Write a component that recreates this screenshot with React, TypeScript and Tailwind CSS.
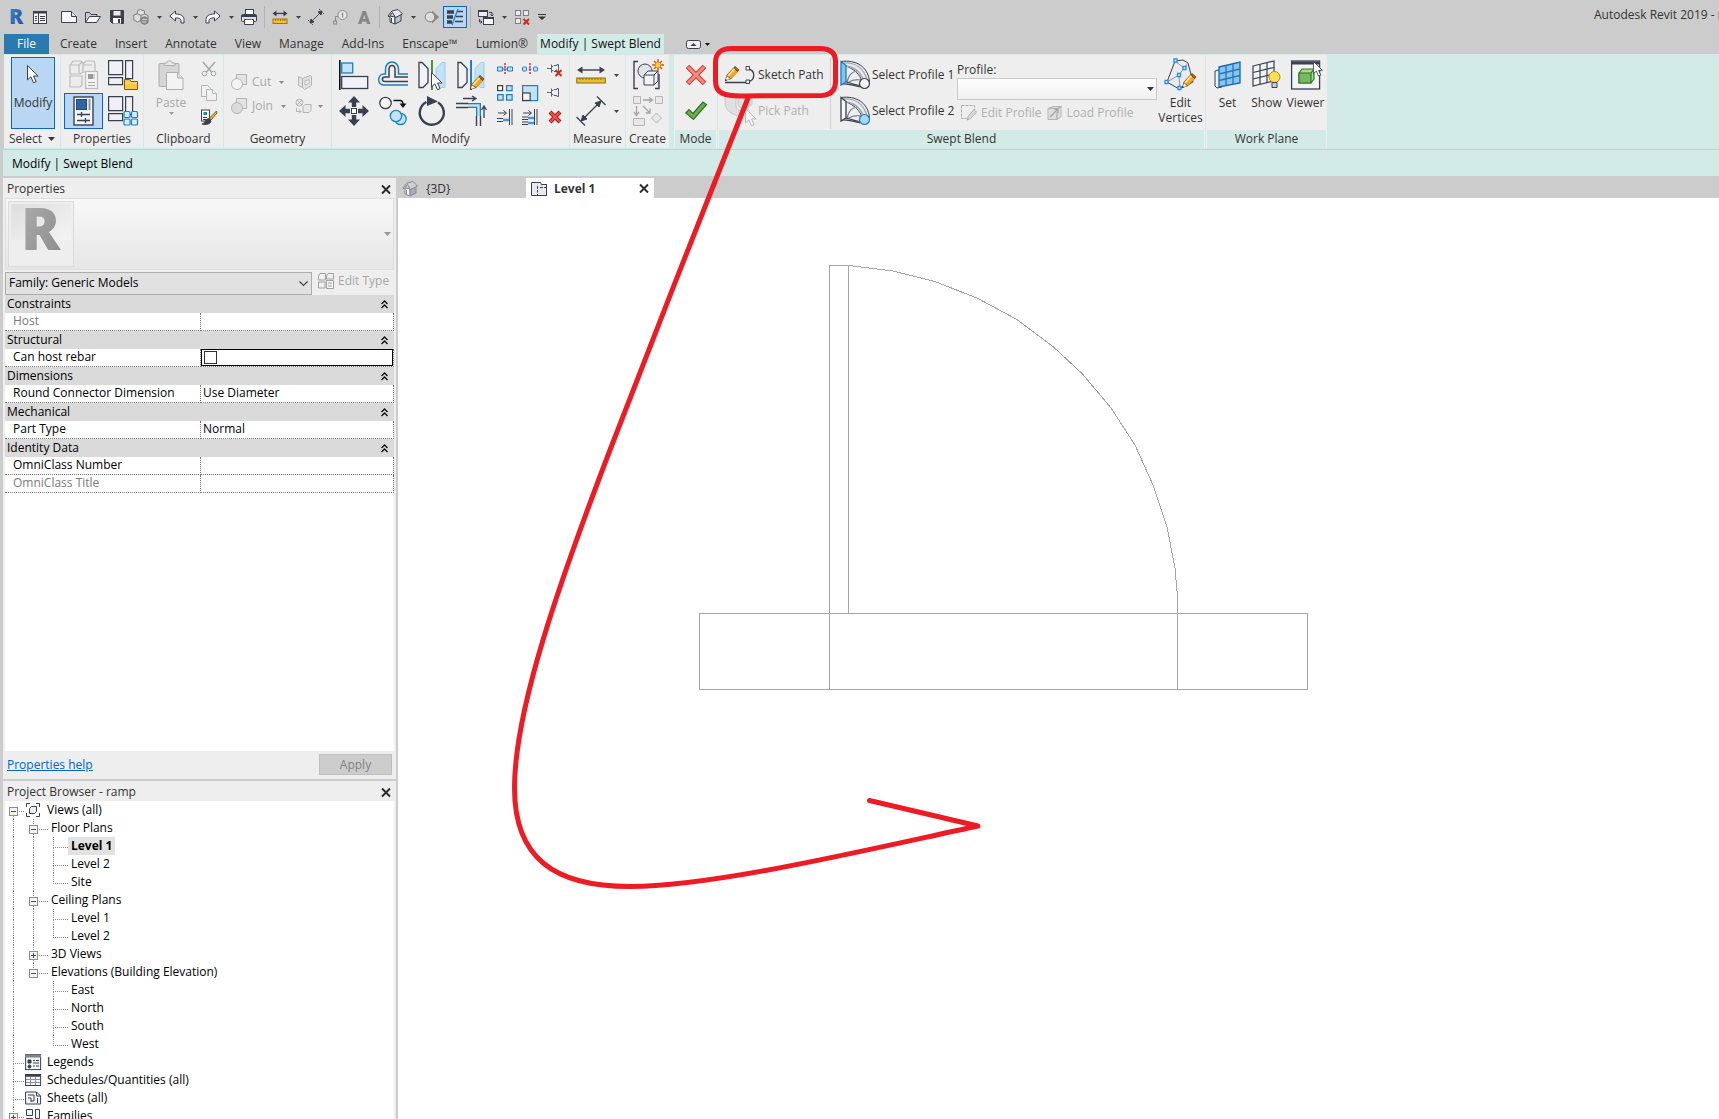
import React from 'react';
import clsx from 'clsx';

const INK = '#3a404d';
const BLUE = '#1a7fc4';
const SKY = '#c2e2f5';
const GREY = '#b4b4b4';

type SvgProps = {
  w?: number;
  h?: number;
  children: React.ReactNode;
  className?: string;
};

function Svg({w = 16, h = w, children, className}: SvgProps) {
  return (
    <svg
      width={w}
      height={h}
      viewBox={`0 0 ${w} ${h}`}
      fill="none"
      stroke={INK}
      aria-hidden="true"
      className={clsx('shrink-0 overflow-visible', className)}
    >
      {children}
    </svg>
  );
}

function Caret({color = '#444'}: {color?: string}) {
  return (
    <Svg w={5} h={3}>
      <path d="M0 0h5L2.5 3z" fill={color} stroke="none"/>
    </Svg>
  );
}

function CloseIcon() {
  return (
    <Svg w={10} h={9}>
      <path d="M1 .5l8 8M9 .5l-8 8" stroke="#2b2b2b" strokeWidth="1.9"/>
    </Svg>
  );
}

function Cursor({x = 0, y = 0}: {x?: number; y?: number}) {
  return (
    <path
      transform={`translate(${x} ${y})`}
      d="M.5.5v14.4l3.4-3.1 2.6 6 2.6-1.2-2.6-5.6h4.6z"
      fill="#fff"
      stroke={INK}
    />
  );
}

function Pencil({x = 0, y = 0}: {x?: number; y?: number}) {
  return (
    <g transform={`translate(${x} ${y})`} stroke="none">
      <path d="M0 15l1.500-6L10 0l4.500 4L6 13z" fill="#6b4416"/>
      <path d="M2.200 9.300L8.700 2.300l3.900 3.600L5.900 12.600z" fill="#f2a71f"/>
      <path d="M2.200 9.300L8.700 2.300l1.500 1.300L3.700 10.600z" fill="#ffe08a"/>
      <path d="M9.300 1.700l.8-.8 3.700 3.200-.8.900z" fill="#b5652a"/>
      <path d="M1.900 10l3.200 2.800L.8 14.200z" fill="#fff4df"/>
      <path d="M0 15l.6-2 1.400 1.300z" fill="#222"/>
    </g>
  );
}

/* ---------- quick access icons ---------- */

const RevitLogo = () => (
  <Svg w={18} h={22}>
    <defs>
      <linearGradient id="logoBlue" x1="0" y1="0" x2="1" y2="1">
        <stop offset="0" stopColor="#3d8ad0"/>
        <stop offset="1" stopColor="#1b4f93"/>
      </linearGradient>
    </defs>
    <text x="2" y="18" fontFamily="Open Sans, sans-serif" fontWeight="800" fontSize="21" fill="url(#logoBlue)" stroke="none">R</text>
  </Svg>
);

const HomeList = () => (
  <Svg>
    <rect x="1.500" y="2.500" width="13" height="12" fill="#f2f3f6"/>
    <path d="M1 3.500h14" strokeWidth="2"/>
    <path d="M6.500 4v10M3 7.500h2M3 9.500h2M3 11.500h2M8 7.500h5M8 9.500h5M8 11.500h5"/>
  </Svg>
);

const NewDoc = () => (
  <Svg>
    <path d="M.5 2.500h10l5 5v6H.5z" fill="#f7f7fa"/>
    <path d="M10.500 2.500v5h5" fill="#dcdee6"/>
  </Svg>
);

const OpenFolder = () => (
  <Svg>
    <path d="M.5 13.500v-10h4l1.500 2h6v2" fill="#c9ccd4"/>
    <path d="M.5 13.500l4-6h11l-4 6z" fill="#f4f5f8"/>
  </Svg>
);

const Save = () => (
  <Svg>
    <path d="M1.500 1.500h13v13h-11l-2-2z" fill={INK}/>
    <rect x="4.500" y="2" width="7" height="4.500" fill="#e9ebf0" stroke="none"/>
    <rect x="4" y="9" width="8" height="5.500" fill="#fff" stroke="none"/>
    <rect x="9" y="10" width="2" height="4" fill={INK} stroke="none"/>
  </Svg>
);

const Sync = () => (
  <Svg>
    <g stroke="#808080" fill="#dedede">
      <path d="M4.500 1.500l3-1 4 1.500v4l-3.500 1-3.500-1.500z"/>
      <path d="M.8 6l3.500-1.200L8 6.500v5L4.500 13 .8 11z"/>
      <path d="M8 6.500L11.500 5 15 6.500V10l-7 2z"/>
      <circle cx="11.500" cy="11.500" r="3.800" fill="#8f8f8f"/>
      <path d="M9 10.500h5M9 13h4" stroke="#c7c7c7"/>
    </g>
  </Svg>
);

const Undo = ({flip = false}: {flip?: boolean}) => (
  <Svg className={flip ? '-scale-x-100' : ''}>
    <path d="M.8 7L6.500 2v3c5.500 0 8.500 2 8.500 5.500V14h-3v-2.500c0-1.800-2-2.600-5.500-2.600V12z" fill="#f6f6f8"/>
  </Svg>
);

const Print = () => (
  <Svg>
    <rect x="4.500" y=".5" width="8" height="6" fill="#fff"/>
    <rect x=".5" y="5.500" width="15" height="7" rx="1" fill="#dcdfe6"/>
    <path d="M1 7h14" strokeWidth="2"/>
    <path d="M3.500 10.500h9v5h-9z" fill="#fff"/>
    <path d="M5 10.500h6" stroke={BLUE}/>
  </Svg>
);

const MeasureSmall = () => (
  <Svg>
    <path d="M2 4.500h12" strokeWidth="1.300"/>
    <path d="M4.500 1.500L.5 4.500l4 3zM11.500 1.500l4 3-4 3z" fill={INK} stroke="none"/>
    <rect x="1" y="10" width="14" height="4.500" fill="#f4c02f" stroke="#a8720c"/>
    <path d="M3.500 10v2M6 10v2M8.500 10v2M11 10v2M13 10v2" stroke="#a8720c"/>
  </Svg>
);

const DimSmall = () => (
  <Svg>
    <path d="M3 13L13 3"/>
    <path d="M2 14l1-4 3 3zM14 2l-4 1 3 3z" fill={INK}/>
    <path d="M0 11l5 5M11 0l5 5" strokeDasharray="2 1"/>
  </Svg>
);

const Tag = () => (
  <Svg>
    <g stroke="#8c8c8c">
      <circle cx="10.500" cy="6" r="4.500" fill="#e8e8e8"/>
      <path d="M6 7.500H3.500v5"/>
      <rect x="1.500" y="12" width="3" height="3"/>
      <path d="M9.500 5l1.200-1v4.500" stroke="#777"/>
    </g>
  </Svg>
);

const TextTool = () => (
  <Svg>
    <text x="2" y="15" fontFamily="Roboto, sans-serif" fontWeight="900" fontSize="18" fill="#868686" stroke="none">A</text>
  </Svg>
);

const House = ({grey = false}: {grey?: boolean}) => (
  <Svg>
    <g stroke={grey ? '#85898f' : INK}>
      <path d="M3 7v6l5 2V8z" fill="#f4f5f8"/>
      <path d="M8 8v7l6-3V5z" fill={grey ? '#a9adb3' : '#b9c1cf'}/>
      <path d="M1 7l4-5 6-1.500L15.500 5 8.500 8.500 5.500 3.500 2 8z" fill={grey ? '#cdd0d4' : '#e4e8ef'}/>
      <path d="M4.500 9v4"/>
    </g>
  </Svg>
);

const Section = () => (
  <Svg>
    <path d="M9 1.500l7 6.500-7 6.500z" fill="#868686" stroke="none"/>
    <circle cx="7" cy="8" r="4.800" fill="#ddd" stroke="#868686"/>
  </Svg>
);

const ThinLines = () => (
  <Svg w={18} h={16}>
    <path d="M1 3h7M1 8h6M1 13h5" strokeWidth="3.500"/>
    <path d="M11 2.500h6M10 7.500h7M9 12.500h8" strokeWidth="1.500"/>
    <path d="M12 0L6 16" stroke="#1283e6" strokeWidth="1.300"/>
  </Svg>
);

const SwitchWindows = () => (
  <Svg>
    <rect x=".5" y="1.500" width="9" height="6" fill="#eceef3"/>
    <path d="M0 2h10" strokeWidth="2"/>
    <rect x="5.500" y="8.500" width="10" height="7" fill="#f7f8fa"/>
    <path d="M5 9h11" strokeWidth="2"/>
    <path d="M11 3.500h3v3M12.500 5.500l1.500 1.500 1.500-1.500M1.500 10v3h2M2.500 11.500L4 13l-1.500 1.500"/>
  </Svg>
);

const CloseHidden = () => (
  <Svg>
    <g stroke="#7b8089" fill="#e9eaee">
      <rect x="1.500" y="1.500" width="5" height="5"/>
      <rect x="9.500" y="1.500" width="5" height="5"/>
      <rect x="1.500" y="9.500" width="5" height="5"/>
    </g>
    <path d="M9.500 10l5.500 5.500M15 10l-5.500 5.500" stroke="#d5261f" strokeWidth="2"/>
  </Svg>
);

/* ---------- ribbon icons ---------- */

const FamilyGrid = ({badge}: {badge: 'folder' | 'cubes'}) => (
  <Svg w={30} h={30}>
    <g fill="#f0f1f6" strokeWidth="1.200">
      <path d="M.6.6h14v14H.6zM17.600.6h7v18h-7zM.6 17.600h14v7H.6z"/>
    </g>
    {badge === 'folder' ? (
      <g stroke="#8c5a06">
        <path d="M16.500 29.500v-10h5l1.500 2h6.500v8z" fill="#f6c945"/>
        <path d="M17 23h12" stroke="#fde38d"/>
      </g>
    ) : (
      <g stroke={BLUE} fill="#d3edfa" strokeWidth="1.200">
        <rect x="16" y="15.500" width="6" height="6" rx="1"/>
        <rect x="23.500" y="15.500" width="6" height="6" rx="1"/>
        <rect x="16" y="23" width="6" height="6" rx="1"/>
        <rect x="23.500" y="23" width="6" height="6" rx="1"/>
      </g>
    )}
  </Svg>
);

const TypeProps = () => (
  <Svg w={30} h={30}>
    <g stroke="#bdbdbd" fill="#ececec" strokeWidth="1.200">
      <path d="M1 5l3-4h8l2 2v9l-3 2H1zM14 4l3-3h8l1 3v8H14zM1 16h12v9l-2 2H1z"/>
      <path d="M1 5h9v9M10 5l3-3M14 5h9"/>
      <rect x="16.500" y="11.500" width="12" height="17" fill="#f2f2f2"/>
    </g>
    <rect x="19" y="14" width="5" height="5" fill="#999" stroke="none"/>
    <path d="M25 14v5M19 22.500h7M19 25.500h7" stroke="#aaa"/>
  </Svg>
);

const PropsSheet = () => (
  <Svg w={21} h={30}>
    <rect x="1" y="1" width="19" height="28" fill="#f5f6f9" strokeWidth="1.400"/>
    <rect x="3.500" y="3.500" width="10" height="10" fill="#2f64a3" stroke="#1d4a80"/>
    <path d="M16.500 3v11" stroke="#8d95a5" strokeWidth="2"/>
    <path d="M4 18.500h13M8.500 16v5M4 24.500h13M12.500 22v5" strokeWidth="1.300"/>
  </Svg>
);

const PasteIcon = () => (
  <Svg w={26} h={30}>
    <g stroke="#adadad">
      <rect x="1" y="3.500" width="20" height="23" rx="1" fill="#d6d6d6"/>
      <path d="M6 5.500V3h3c0-3 5-3 5 0h3v2.500z" fill="#e9e9e9"/>
      <path d="M8.500 12.500h11l5.500 5.500v11.500H8.500z" fill="#f3f3f3"/>
      <path d="M19.500 12.500V18H25" fill="#ddd"/>
    </g>
  </Svg>
);

const CutIcon = () => (
  <Svg>
    <path d="M2 1l8.500 10M14 1L5.500 11" stroke="#a5a5a5" strokeWidth="1.400"/>
    <circle cx="3.500" cy="12.500" r="2.300" stroke="#a5a5a5"/>
    <circle cx="12.500" cy="12.500" r="2.300" stroke="#a5a5a5"/>
  </Svg>
);

const CopyIcon = () => (
  <Svg>
    <g stroke={GREY} fill="#f1f1f1">
      <path d="M.5.500h6l3 3v8h-9z"/>
      <path d="M5.500 4.500h6l4 4v7h-10z"/>
      <path d="M11.500 4.500v4h4"/>
    </g>
  </Svg>
);

const MatchIcon = () => (
  <Svg>
    <rect x=".5" y="1" width="8" height="11" fill="#fff"/>
    <rect x="2.500" y="3" width="3.500" height="3" fill={BLUE} stroke="none"/>
    <path d="M2 8.500h4M2 10.500h4"/>
    <path d="M15.500 2l-7 7 1.500 2 6-7z" fill="#f0b840" stroke="#7a5b22"/>
    <path d="M1 15c3 0 3-5 6.500-5.500L10 12c0 3-5 4-9 3z" fill={INK}/>
  </Svg>
);

const GeoCut = ({solid = false}: {solid?: boolean}) => (
  <Svg>
    <rect x="5.500" y=".5" width="10" height="10" fill="#e4e4e4" stroke={GREY}/>
    <circle cx="6" cy="10" r="5.500" fill={solid ? '#dcdcdc' : '#f4f4f4'} stroke={GREY}/>
  </Svg>
);

const Cope = () => (
  <Svg>
    <g stroke={GREY} fill="#e2e2e2">
      <path d="M1.500 2.500l4 2v9l-4-2zM5.500 4.500l8-3 1 1v9l-7 4-2-2z"/>
      <path d="M8 7l4-1.500v4L8 11z" fill="#f4f4f4"/>
    </g>
  </Svg>
);

const SplitFace = () => (
  <Svg>
    <g stroke={GREY} fill="#e8e8e8">
      <circle cx="4.500" cy="4.500" r="3.500"/>
      <path d="M2 2l5 5M7 2L2 7"/>
      <path d="M8 8.500l2-2h6v6l-2 2H8z"/>
      <path d="M1.500 10v3.500h4M4 11.500l2 2-2 2" fill="none"/>
    </g>
  </Svg>
);

const Align = () => (
  <Svg w={30} h={30}>
    <path d="M.8 0v30" stroke="#000" strokeWidth="1.500"/>
    <rect x="2.700" y="3" width="11" height="10" fill={SKY} stroke={BLUE} strokeWidth="1.300"/>
    <rect x="2.700" y="16.500" width="26" height="12" fill="#f1f2f6" strokeWidth="1.300"/>
  </Svg>
);

const Offset = () => (
  <Svg w={30} h={30}>
    <path d="M30 25H5.500C-1 25-1 14 6 14h1.500V9.500c0-10 13-10 13 0V14H30" stroke={BLUE} strokeWidth="1.500"/>
    <path d="M30 21.500H7c-3.500 0-3.500-4.500 0-4.500h4V9.500c0-5.500 6-5.500 6 0V17h13" strokeWidth="1.500"/>
  </Svg>
);

const MirrorPick = ({draw = false}: {draw?: boolean}) => (
  <Svg w={30} h={30}>
    <path d="M2 2.500h3l6 6v14l-3 3-2 2H2z" fill="#f1f2f6" strokeWidth="1.300"/>
    <path d="M28 2.500h-3l-6 6v14l5 5h4z" fill={SKY} stroke="#9fcbe8"/>
    <path d="M15 0v30" stroke={draw ? '#1d7fd8' : '#3f9a2f'} strokeWidth="2"/>
    {draw ? <Pencil x={14} y={15}/> : <Cursor x={14} y={12}/>}
  </Svg>
);

const Move = () => (
  <Svg w={30} h={30}>
    <g fill={INK} stroke="none">
      <path d="M15 0l6 6.500h-3.800V11h-4.400V6.500H9zM15 30l6-6.500h-3.800V19h-4.400v4.500H9z"/>
      <path d="M0 15l6.500-6v3.800H11v4.400H6.500V21zM30 15l-6.500-6v3.800H19v4.400h4.500V21z"/>
    </g>
    <rect x="12.500" y="12.500" width="5" height="5" fill="#fff"/>
  </Svg>
);

const CopyTool = () => (
  <Svg w={30} h={30}>
    <circle cx="7.500" cy="7" r="5.700" fill="#f6f6f8" strokeWidth="1.300"/>
    <circle cx="22.500" cy="23" r="5.700" fill={SKY} stroke={BLUE} strokeWidth="1.300"/>
    <circle cx="18" cy="20" r="5.700" fill={SKY} stroke={BLUE} strokeWidth="1.300"/>
    <path d="M15.500 4.500h6.500c2 0 3 1.500 3 4" stroke="#111" strokeWidth="1.500"/>
    <path d="M21.500 7.500h7L25 12z" fill="#111" stroke="none"/>
  </Svg>
);

const Rotate = () => (
  <Svg w={30} h={30}>
    <path d="M9.500 6A12 12 0 1 0 21 6.500" strokeWidth="2.400"/>
    <path d="M10 0l11 5.500L10 10z" fill={INK} stroke="none"/>
  </Svg>
);

const Trim = () => (
  <Svg w={30} h={30}>
    <path d="M0 7.500h12M0 11.500h12M20.500 20v10M24.500 20v10" strokeWidth="1.400"/>
    <path d="M12 9.500h10.500V20" stroke={BLUE} strokeWidth="5"/>
    <path d="M12 9.500h10.500V20" stroke={SKY} strokeWidth="2.400"/>
    <path d="M7 2.500h12M16 0l4 2.500L16 5M28 22V11M25.500 14L28 10l2.500 4" strokeWidth="1.300"/>
  </Svg>
);

const Split = ({gap = false}: {gap?: boolean}) => (
  <Svg>
    {gap ? (
      <g fill={SKY} stroke={BLUE}>
        <rect x=".5" y="6" width="4" height="4" rx="1"/>
        <rect x="11.500" y="6" width="4" height="4" rx="1"/>
        <path d="M6.500 8h3"/>
      </g>
    ) : (
      <path d="M.5 6h5v4h-5zM10.500 6h5v4h-5zM5 8h6" fill={SKY} stroke={BLUE}/>
    )}
    <path d="M8 2v12" stroke="#d5261f" strokeDasharray="2 1" strokeWidth="1.400"/>
  </Svg>
);

const Pin = ({un = false}: {un?: boolean}) => (
  <Svg>
    <path d="M0 7.500h4M4.500 3.500v8" stroke="#5a606c"/>
    <path d="M4.500 5.500h1.500l1-1h3v-1h1.500v8H10v-1H7l-1-1H4.500z" fill="#eef0f4" stroke="#5a606c"/>
    {un && <path d="M8.500 9l6 6M14.500 9l-6 6" stroke="#d5261f" strokeWidth="1.900"/>}
  </Svg>
);

const ArrayIcon = () => (
  <Svg>
    <rect x=".6" y=".6" width="5" height="5" fill="#f7f7f9" strokeWidth="1.200"/>
    <g fill={SKY} stroke={BLUE} strokeWidth="1.200">
      <path d="M9.600.6h5.500v5H9.600zM.6 9.600h5.500v5.500H.6zM9.600 9.600h5.500v5.500H9.600z"/>
    </g>
  </Svg>
);

const Scale = () => (
  <Svg>
    <rect x=".6" y=".6" width="15" height="15" fill={SKY} stroke={BLUE} strokeWidth="1.200"/>
    <rect x=".6" y="8" width="7.500" height="7.500" fill="#f7f7f9" strokeWidth="1.200"/>
  </Svg>
);

const TrimSingle = ({multi = false}: {multi?: boolean}) => (
  <Svg>
    <path d="M12.500 0v16M15 0v16M1 4h8M6.500 1.500L9.500 4l-3 2.500"/>
    <path d={multi ? 'M0 8h6M0 10.500h6M0 13h6M0 15.500h6' : 'M0 9.500h6M0 12.500h6'}/>
    <path d={multi ? 'M6 9h6M6 14h6' : 'M6 11h6'} stroke="#3f9be0" strokeWidth="2.500"/>
  </Svg>
);

const DeleteIcon = () => (
  <Svg>
    <path d="M3 3l10 10M13 3L3 13" stroke="#a81a16" strokeWidth="4.200"/>
    <path d="M3.500 3.500l9 9M12.500 3.500l-9 9" stroke="#e9544c" strokeWidth="2.200"/>
  </Svg>
);

const MeasureBig = () => (
  <Svg w={30} h={30}>
    <path d="M3 10h24" strokeWidth="1.400"/>
    <path d="M6.500 6.500L1 10l5.500 3.500zM23.500 6.500L29 10l-5.500 3.500z" fill={INK} stroke="none"/>
    <rect x=".8" y="18" width="28.500" height="5" fill="#eabf2d" stroke="#8f6a0d"/>
    <path d="M4 18v2M7 18v2M10 18v2M13 18v2M16 18v2M19 18v2M22 18v2M25 18v2" stroke="#8f6a0d"/>
  </Svg>
);

const DimBig = () => (
  <Svg w={30} h={30}>
    <path d="M6 24L24 6" strokeWidth="1.300"/>
    <path d="M5 25l2-6 4 4zM25 5l-6 2 4 4z" fill={INK}/>
    <path d="M.5 21l8.500 8.500M21 .5L29.500 9" strokeWidth="1.300"/>
  </Svg>
);

const CreateGroup = () => (
  <Svg w={30} h={30}>
    <path d="M5 1.500H1v27h4M22 28.500h4V14" strokeWidth="1.400"/>
    <circle cx="12" cy="11" r="7" fill="#dfe5ee"/>
    <path d="M11 15l4-4h10v10l-4 4H11zM11 15h10v10M21 15l4-4" fill="#f1f4f8"/>
    <path d="M25-1v12M19 5h12M21 1l8 8M29 1l-8 8" stroke="#d3531d" strokeWidth="1.400"/>
    <circle cx="25" cy="5" r="3" fill="#ffd23e" stroke="#e98a17"/>
  </Svg>
);

const CreateSimilar = () => (
  <Svg w={30} h={30}>
    <g stroke={GREY} fill="#e8e8e8">
      <path d="M.5.500h7v7h-7zM22.500.500h7v7h-7zM.5 22.500h11v7H.500zM23.500 17l5 5-5 5-5-5z"/>
      <path d="M10 4h9M16 1.500L19.500 4 16 6.500M3.500 10v9M1 16l2.500 3.500L6 16M10 10l7 7M17 12.500V17h-4.500" fill="none" stroke="#a4a4a4" strokeWidth="1.300"/>
    </g>
  </Svg>
);

const CancelX = () => (
  <Svg w={22} h={22}>
    <path d="M2.500 2.500l17 17M19.500 2.500l-17 17" stroke="#c93a2e" strokeWidth="5"/>
    <path d="M3 3l16 16M19 3L3 19" stroke="#f58b7d" strokeWidth="3"/>
  </Svg>
);

const FinishCheck = () => (
  <Svg w={22} h={20}>
    <path d="M.8 12L4 8.500l4 4L18 1l3.500 2.500L8.500 18.500z" fill="#6fae4f" stroke="#35702a" strokeWidth="1.200"/>
  </Svg>
);

const SketchPath = () => (
  <Svg w={32} h={20}>
    <Pencil x={1} y={1}/>
    <path d="M1 17.500h21M24.500 4c7 1.500 7 11 0 12.500" strokeWidth="1.300"/>
    <path d="M22 1.500h3.500V5H22zM22 15h3.500v3.500H22z" fill="#fff"/>
  </Svg>
);

const PickPath = () => (
  <Svg w={32} h={32}>
    <g stroke="#c6c6c6" fill="#e0e0e0">
      <path d="M1 6V3l3-2h8v10c0 3 2 4 5 5v5C8 20 1 16 1 6z"/>
      <path d="M14 1h7v8c0 3 7 3 7 0V1h-4v16l-7-4c-2-1-3-3-3-5z"/>
    </g>
    <path transform="translate(21 13)" d="M.5.5v14.400l3.400-3.100 2.600 6 2.600-1.200-2.600-5.600h4.600z" fill="#fafafa" stroke="#b8b8b8"/>
  </Svg>
);

// curved solid with its start or end profile picked out in blue
const ProfileIcon = ({second = false}: {second?: boolean}) => (
  <Svg w={30} h={30}>
    <path d="M1 1.500c15-2 27 5 28.500 20l-7 1C20 14 14 9 6 6z" fill="#e9ebee"/>
    <path d="M3 3c13-1 21 6 24 17M6 6c10 1 15 7 18 15" stroke="#a3a8b1" strokeWidth="1.400"/>
    <path d="M7 22c2-8 5-10 10-11M7 23c5-3 9-4 14-3" stroke="#7e8590" strokeWidth="1.200"/>
    <path d="M6 22l15 4M1 24c6-1 12 1 19 3" strokeWidth="1.200"/>
    <path d="M1 1.500l5 4V22l-5 3z" fill={second ? '#f6f7f9' : '#86c4ee'} stroke={second ? INK : BLUE} strokeWidth="1.300"/>
    <circle cx="24.500" cy="23.500" r="5" fill={second ? '#a9d6f3' : '#f6f7f9'} stroke={second ? BLUE : INK} strokeWidth="1.200"/>
  </Svg>
);

const EditProfileIcon = () => (
  <Svg>
    <path d="M.5.500h13v6M.5.500v13h5" stroke="#ababab" strokeDasharray="3 1"/>
    <path d="M6 15l1.500-4L13 4.500l2.500 2.500L9.500 13.500z" fill="#dcdcdc" stroke="#ababab"/>
  </Svg>
);

const LoadProfileIcon = () => (
  <Svg>
    <g stroke={GREY} fill="#dedede">
      <path d="M1 3.500h9v11H1zM1 3.500l5-2h9l-5 2zM10 3.500l4-1v9l-4 3z"/>
      <path d="M3 12l8-8M11 8V4H7" stroke="#a5a5a5" strokeWidth="1.300"/>
    </g>
  </Svg>
);

const EditVertices = () => (
  <Svg w={32} h={32}>
    <path d="M10 2l8-1 5 3 5 19-14 7L2 23z" fill="#e9ebef"/>
    <path d="M10 2l9 7-5 7L2 23M14 16l1 14M19 9l4-5" stroke="#8f95a0"/>
    <Pencil x={17} y={14}/>
    <g fill="#fff" stroke="#2b8cec" strokeWidth="1.300">
      <path d="M9 0h3v3H9zM18 7.500h3v3h-3zM12.500 14.500h3v3h-3zM0 21.500h3v3H0zM13 27.500h3v3h-3z"/>
    </g>
  </Svg>
);

const SetPlane = () => (
  <Svg w={28} h={30}>
    <path d="M1 11l7-2v18l-5 1-2-2z" fill="#f1f2f5"/>
    <path d="M5 7l21-5v21L5 27z" fill="#8cc4ec" stroke="#0f67b5" strokeWidth="1.300"/>
    <path d="M5 14l21-5M5 20.500l21-5M12 5.500v20M19 4v20.500" stroke="#2178bf" strokeWidth="1.300"/>
  </Svg>
);

const ShowPlane = () => (
  <Svg w={30} h={30}>
    <path d="M1 6l21-5v20L1 26z" fill="#f1f2f5" strokeWidth="1.200"/>
    <path d="M1 12.500l21-5M1 19l21-5M8 4.500v20M15 3v20" strokeWidth="1.200"/>
    <circle cx="22.500" cy="17" r="5.500" fill="#ffe14d" stroke="#b98a14"/>
    <path d="M20 22.500h5v5h-5z" fill="#c9ccd4"/>
  </Svg>
);

const ViewerIcon = () => (
  <Svg w={32} h={30}>
    <rect x="1.600" y="1" width="28" height="28" fill="#f3f4f7" strokeWidth="1.300"/>
    <path d="M1 3h29" strokeWidth="3"/>
    <path d="M9 13l3-4h12v10l-3 4H9z" fill="#a9d795" stroke="#2f7a1f" strokeWidth="1.200"/>
    <path d="M9 13h12v10H9zM21 13l3-4" fill="#79b862" stroke="#2f7a1f" strokeWidth="1.200"/>
    <path transform="translate(23 1) scale(.85)" d="M.5.5v14.400l3.400-3.100 2.600 6 2.600-1.200-2.600-5.600h4.600z" fill="#fff" stroke={INK}/>
  </Svg>
);

/* ---------- quick access bar and tabs ---------- */

function QatButton({label, active, children}: {label: string; active?: boolean; children: React.ReactNode}) {
  return (
    <button
      type="button"
      aria-label={label}
      className={clsx(
        'flex h-[22px] w-6 shrink-0 items-center justify-center',
        active && 'border border-[#0a66c8] bg-[#b9d7f3]'
      )}
    >
      {children}
    </button>
  );
}

function QatCaret({label}: {label: string}) {
  return (
    <button type="button" aria-label={label} className="flex h-[22px] w-3 shrink-0 items-center justify-center">
      <Caret/>
    </button>
  );
}

const QatSep = () => (
  <div className="flex w-[7px] shrink-0 justify-center">
    <div className="h-[22px] w-px bg-[#b3b3b3]"/>
  </div>
);

function QuickAccess() {
  return (
    <header className="flex h-[34px] shrink-0 items-center overflow-hidden pl-1">
      <QatButton label="Revit"><RevitLogo/></QatButton>
      <QatButton label="Home"><HomeList/></QatButton>
      <div className="w-[5px] shrink-0"/>
      <QatButton label="New"><NewDoc/></QatButton>
      <QatButton label="Open"><OpenFolder/></QatButton>
      <QatButton label="Save"><Save/></QatButton>
      <QatButton label="Synchronize"><Sync/></QatButton>
      <QatCaret label="Synchronize options"/>
      <QatButton label="Undo"><Undo/></QatButton>
      <QatCaret label="Undo history"/>
      <QatButton label="Redo"><Undo flip/></QatButton>
      <QatCaret label="Redo history"/>
      <QatButton label="Print"><Print/></QatButton>
      <QatSep/>
      <QatButton label="Measure"><MeasureSmall/></QatButton>
      <QatCaret label="Measure options"/>
      <QatButton label="Aligned dimension"><DimSmall/></QatButton>
      <QatButton label="Tag"><Tag/></QatButton>
      <QatButton label="Text"><TextTool/></QatButton>
      <QatSep/>
      <QatButton label="3D view"><House/></QatButton>
      <QatCaret label="3D view options"/>
      <QatButton label="Section"><Section/></QatButton>
      <QatButton label="Thin lines" active><ThinLines/></QatButton>
      <QatSep/>
      <QatButton label="Switch windows"><SwitchWindows/></QatButton>
      <QatCaret label="Window list"/>
      <QatButton label="Close hidden windows"><CloseHidden/></QatButton>
      <button type="button" aria-label="Customize" className="flex h-[22px] w-4 shrink-0 items-center justify-center">
        <Svg w={8} h={6}>
          <path d="M0 .5h8" stroke="#333"/>
          <path d="M0 2.500h8L4 6z" fill="#333" stroke="none"/>
        </Svg>
      </button>
      <span className="mb-1 ml-auto w-[125px] shrink-0 overflow-hidden whitespace-nowrap">Autodesk Revit 2019 - ra</span>
    </header>
  );
}

const TABS = ['Create', 'Insert', 'Annotate', 'View', 'Manage', 'Add-Ins', 'Enscape™', 'Lumion®'];

function RibbonTabs() {
  return (
    <nav className="flex h-5 shrink-0 items-stretch pl-1">
      <button type="button" className="mr-[2px] w-[45px] bg-[#2a7ab0] text-white">File</button>
      {TABS.map((tab) => (
        <button key={tab} type="button" className="px-[9px]">{tab}</button>
      ))}
      <button type="button" className="w-[127px] whitespace-nowrap bg-[#d3ebe7] text-[#111]">
        Modify | Swept Blend
      </button>
      <button type="button" aria-label="Minimize ribbon" className="ml-[22px] flex items-center gap-1">
        <Svg w={15} h={9}>
          <rect x=".5" y=".5" width="14" height="8" rx="2" fill="#eef0f4"/>
          <path d="M4.500 6h6l-3-3z" fill={INK} stroke="none"/>
        </Svg>
        <Caret color="#111"/>
      </button>
    </nav>
  );
}

/* ---------- ribbon ---------- */

function Panel({title, width, contextual, children}: {
  title: React.ReactNode;
  width: string;
  contextual?: boolean;
  children: React.ReactNode;
}) {
  return (
    <section className={clsx('flex shrink-0 flex-col border-r border-[#d3ebe7] bg-[#eeeeee]', width)}>
      <div className="flex h-[75px] pt-[2px]">{children}</div>
      <h2
        className={clsx(
          'flex h-[18px] items-center justify-center whitespace-nowrap',
          contextual && 'mx-px bg-[#d3ebe7]'
        )}
      >
        {title}
      </h2>
    </section>
  );
}

function Tool({label, size = 'big', active, children}: {
  label: string;
  size?: 'big' | 'small';
  active?: boolean;
  children: React.ReactNode;
}) {
  return (
    <button
      type="button"
      aria-label={label}
      className={clsx(
        'flex items-center justify-center',
        size === 'big' ? 'h-9' : 'h-6',
        active && 'border border-[#0a66c8] bg-[#b9d7f3]'
      )}
    >
      {children}
    </button>
  );
}

function PlaneTool({label, children}: {label: string; children: React.ReactNode}) {
  return (
    <button type="button" className="flex w-[39px] flex-col items-center gap-[3px] pt-[2px]">
      <span className="flex h-8 items-center">{children}</span>
      <span className="leading-[18px]">{label}</span>
    </button>
  );
}

function SweptBlendPanel() {
  return (
    <Panel title="Swept Blend" width="w-[488px]" contextual>
      <div className="grid h-[72px] w-[113px] grid-rows-2 border-r border-[#cfcfcf] pl-[6px]">
        <button type="button" className="flex items-center gap-[2px] whitespace-nowrap"><SketchPath/>Sketch Path</button>
        <button type="button" disabled className="flex items-center gap-[2px] whitespace-nowrap text-[#b0b0b0]"><PickPath/>Pick Path</button>
      </div>
      <div className="grid h-[72px] w-[126px] grid-rows-2 pl-[9px]">
        <button type="button" className="flex items-center gap-[2px] whitespace-nowrap"><ProfileIcon/>Select Profile 1</button>
        <button type="button" className="flex items-center gap-[2px] whitespace-nowrap"><ProfileIcon second/>Select Profile 2</button>
      </div>
      <div className="flex w-[200px] flex-col pt-[5px]">
        <label htmlFor="profile" className="leading-4">Profile:</label>
        <div className="relative">
          <select
            id="profile"
            className="block h-[22px] w-full appearance-none border border-[#c9c9c9] bg-linear-to-b from-white to-[#f0f0f0]"
          />
          <span className="pointer-events-none absolute right-[3px] top-[9px] flex">
            <Svg w={7} h={4}><path d="M0 0h7L3.500 4z" fill="#333" stroke="none"/></Svg>
          </span>
        </div>
        <div className="mt-[5px] flex gap-[5px] pl-1 text-[#b0b0b0]">
          <button type="button" disabled className="flex items-center gap-1 whitespace-nowrap"><EditProfileIcon/>Edit Profile</button>
          <button type="button" disabled className="flex items-center gap-1 whitespace-nowrap"><LoadProfileIcon/>Load Profile</button>
        </div>
      </div>
      <button type="button" className="flex w-[47px] flex-col items-center gap-1 pt-[2px]">
        <EditVertices/>
        <span className="leading-[15px]">Edit<br/>Vertices</span>
      </button>
    </Panel>
  );
}

function Ribbon() {
  return (
    <div className="ml-1 flex h-[95px] shrink-0 border-y border-[#d3ebe7] bg-[#d3ebe7]">
      <Panel
        width="w-[57px]"
        title={<span className="flex items-center gap-[6px]">Select <Svg w={7} h={4}><path d="M0 0h7L3.500 4z" fill="#333" stroke="none"/></Svg></span>}
      >
        <button type="button" className="ml-[7px] flex h-[72px] w-11 flex-col items-center border border-[#0a66c8] bg-[#b9d7f3] pt-[7px]">
          <Svg w={12} h={20}><Cursor/></Svg>
          <span className="mt-[9px] leading-[18px]">Modify</span>
        </button>
      </Panel>
      <Panel title="Properties" width="w-[83px]">
        <div className="ml-[3px] grid w-[78px] grid-cols-2 content-start">
          <Tool label="Type properties"><TypeProps/></Tool>
          <Tool label="Family category"><FamilyGrid badge="folder"/></Tool>
          <Tool label="Properties" active><PropsSheet/></Tool>
          <Tool label="Family types"><FamilyGrid badge="cubes"/></Tool>
        </div>
      </Panel>
      <Panel title="Clipboard" width="w-20">
        <button type="button" disabled className="ml-[9px] flex w-9 flex-col items-center pt-[3px] text-[#a8a8a8]">
          <PasteIcon/>
          <span className="mt-1 leading-[18px]">Paste</span>
          <Caret color="#999"/>
        </button>
        <div className="ml-2 grid w-6 content-start">
          <Tool label="Cut to clipboard" size="small"><CutIcon/></Tool>
          <Tool label="Copy to clipboard" size="small"><CopyIcon/></Tool>
          <Tool label="Match type" size="small"><MatchIcon/></Tool>
        </div>
      </Panel>
      <Panel title="Geometry" width="w-[108px]">
        <div className="flex w-full flex-col pl-[7px] pt-[13px] text-[#a8a8a8]">
          <div className="flex h-6 items-center">
            <button type="button" disabled className="flex w-12 items-center gap-[5px]"><GeoCut/>Cut</button>
            <Caret color="#888"/>
            <button type="button" aria-label="Cope" disabled className="ml-[13px]"><Cope/></button>
          </div>
          <div className="flex h-6 items-center">
            <button type="button" disabled className="flex w-[50px] items-center gap-[5px]"><GeoCut solid/>Join</button>
            <Caret color="#888"/>
            <button type="button" aria-label="Split face" disabled className="ml-[9px] mr-[7px]"><SplitFace/></button>
            <Caret color="#888"/>
          </div>
        </div>
      </Panel>
      <Panel title="Modify" width="w-[238px]">
        <div className="ml-[2px] grid w-[156px] grid-cols-4 content-start">
          <Tool label="Align"><Align/></Tool>
          <Tool label="Offset"><Offset/></Tool>
          <Tool label="Mirror - pick axis"><MirrorPick/></Tool>
          <Tool label="Mirror - draw axis"><MirrorPick draw/></Tool>
          <Tool label="Move"><Move/></Tool>
          <Tool label="Copy"><CopyTool/></Tool>
          <Tool label="Rotate"><Rotate/></Tool>
          <Tool label="Trim/extend to corner"><Trim/></Tool>
        </div>
        <div className="ml-[2px] grid w-[75px] grid-cols-3 content-start">
          <Tool label="Split element" size="small"><Split/></Tool>
          <Tool label="Split with gap" size="small"><Split gap/></Tool>
          <Tool label="Unpin" size="small"><Pin un/></Tool>
          <Tool label="Array" size="small"><ArrayIcon/></Tool>
          <Tool label="Scale" size="small"><Scale/></Tool>
          <Tool label="Pin" size="small"><Pin/></Tool>
          <Tool label="Trim single" size="small"><TrimSingle/></Tool>
          <Tool label="Trim multiple" size="small"><TrimSingle multi/></Tool>
          <Tool label="Delete" size="small"><DeleteIcon/></Tool>
        </div>
      </Panel>
      <Panel title="Measure" width="w-14">
        <div className="grid w-full grid-cols-[42px_9px] content-start">
          <Tool label="Measure between references"><MeasureBig/></Tool>
          <Tool label="Measure options"><Caret/></Tool>
          <Tool label="Dimension"><DimBig/></Tool>
          <Tool label="Dimension options"><Caret/></Tool>
        </div>
      </Panel>
      <Panel title="Create" width="w-11">
        <div className="grid w-full content-start">
          <Tool label="Create group"><CreateGroup/></Tool>
          <Tool label="Create similar"><CreateSimilar/></Tool>
        </div>
      </Panel>
      <div className="w-1 shrink-0"/>
      <Panel title="Mode" width="w-11" contextual>
        <div className="grid w-full content-start">
          <Tool label="Cancel edit mode"><CancelX/></Tool>
          <Tool label="Finish edit mode"><FinishCheck/></Tool>
        </div>
      </Panel>
      <SweptBlendPanel/>
      <Panel title="Work Plane" width="w-[122px]" contextual>
        <div className="flex w-full justify-center">
          <PlaneTool label="Set"><SetPlane/></PlaneTool>
          <PlaneTool label="Show"><ShowPlane/></PlaneTool>
          <PlaneTool label="Viewer"><ViewerIcon/></PlaneTool>
        </div>
      </Panel>
    </div>
  );
}

/* ---------- properties palette ---------- */

type Param = {name: string; value?: string; readOnly?: boolean; check?: boolean};

const GROUPS: {title: string; params: Param[]}[] = [
  {title: 'Constraints', params: [{name: 'Host', readOnly: true}]},
  {title: 'Structural', params: [{name: 'Can host rebar', check: true}]},
  {title: 'Dimensions', params: [{name: 'Round Connector Dimension', value: 'Use Diameter'}]},
  {title: 'Mechanical', params: [{name: 'Part Type', value: 'Normal'}]},
  {title: 'Identity Data', params: [{name: 'OmniClass Number'}, {name: 'OmniClass Title', readOnly: true}]},
];

function PaletteHeader({title}: {title: string}) {
  return (
    <div className="flex h-5 shrink-0 items-center justify-between pl-[2px] pr-[3px] pt-[2px]">
      <h2>{title}</h2>
      <button type="button" aria-label={`Close ${title}`}><CloseIcon/></button>
    </div>
  );
}

function PropertiesPalette() {
  return (
    <section className="flex h-[601px] shrink-0 flex-col bg-[#eeeeee] px-[2px]">
      <PaletteHeader title="Properties"/>
      <div className="flex h-[72px] shrink-0 items-center justify-between border border-[#dfdfdf] bg-linear-to-b from-[#f8f8f8] to-[#e6e6e6] pl-[2px] pr-[2px]">
        <div className="flex size-[66px] items-center justify-center border border-[#dcdcdc] bg-[#eeeeee]">
          <svg width="60" height="60" viewBox="0 0 60 60" aria-hidden="true" className="overflow-visible">
            <defs>
              <linearGradient id="thumb" x1="0" y1="0" x2="1" y2="1">
                <stop offset="0" stopColor="#dedede"/>
                <stop offset="1" stopColor="#f4f4f4"/>
              </linearGradient>
              <linearGradient id="logoGrey" x1="0" y1="0" x2="1" y2="1">
                <stop offset="0" stopColor="#b0b0b0"/>
                <stop offset="1" stopColor="#8a8a8a"/>
              </linearGradient>
            </defs>
            <rect width="60" height="36" fill="url(#thumb)"/>
            <text x="10" y="46" fontFamily="Open Sans, sans-serif" fontWeight="800" fontSize="58" fill="url(#logoGrey)">R</text>
          </svg>
        </div>
        <button type="button" aria-label="Type selector">
          <Svg w={7} h={4}><path d="M0 0h7L3.500 4z" fill="#999" stroke="none"/></Svg>
        </button>
      </div>
      <div className="flex h-[25px] shrink-0 items-center gap-[6px] pt-px">
        <div className="relative h-[23px] w-[307px]">
          <select aria-label="Family" className="size-full appearance-none border border-[#adadad] bg-[#e1e1e1] pl-[3px] text-black">
            <option>Family: Generic Models</option>
          </select>
          <span className="pointer-events-none absolute right-1 top-[9px] flex">
            <Svg w={9} h={5}><path d="M.5.500l4 4 4-4" stroke="#444" strokeWidth="1.200"/></Svg>
          </span>
        </div>
        <button type="button" disabled className="flex items-center gap-1 whitespace-nowrap pb-1 text-[#a8a8a8]">
          <Svg>
            <g stroke="#a0a0a0">
              <path d="M.5 3L2 .5h5.500V7H.5zM8.500 3L10 .5h5.500V6H8.500zM.5 9h6.500v6H.5z" fill="#efefef"/>
              <path d="M8.500 7.500h7v8h-7z" fill="#f5f5f5"/>
              <path d="M10 10h4M10 13h4"/>
            </g>
          </Svg>
          Edit Type
        </button>
      </div>
      <div className="min-h-0 flex-1 bg-white text-black">
        <table className="w-full table-fixed border-separate border-spacing-0">
          <colgroup>
            <col className="w-[196px]"/>
            <col/>
          </colgroup>
          {GROUPS.map((group) => (
            <tbody key={group.title}>
              <tr className="h-[18px]">
                <th colSpan={2} className="bg-[#dadada] p-0 pl-[2px] pr-[6px] text-left font-normal">
                  <button type="button" className="flex h-[18px] w-full items-center justify-between">
                    {group.title}
                    <Svg w={7} h={9}>
                      <path d="M.5 4l3-3 3 3M.5 8l3-3 3 3" stroke="#111" strokeWidth="1.400"/>
                    </Svg>
                  </button>
                </th>
              </tr>
              {group.params.map((p) => (
                <tr key={p.name} className="h-[18px]">
                  <td className={clsx('h-[18px] border-b border-r border-dotted border-[#777] p-0 pl-2 align-top leading-4', p.readOnly && 'text-[#7a7a7a]')}>
                    {p.check ? <label htmlFor="rebar">{p.name}</label> : p.name}
                  </td>
                  <td className="h-[18px] border-b border-r border-dotted border-[#777] p-0 align-top leading-4">
                    {p.check ? (
                      <div className="flex h-[17px] items-center border border-black pl-[2px]">
                        <input id="rebar" type="checkbox" className="size-[13px] appearance-none border border-[#333] bg-white"/>
                      </div>
                    ) : (
                      <span className="pl-[2px]">{p.value}</span>
                    )}
                  </td>
                </tr>
              ))}
            </tbody>
          ))}
        </table>
      </div>
      <div className="flex h-7 shrink-0 items-center justify-between pb-px pl-[2px] pr-[2px]">
        <a href="#help" className="text-[#0066cc] underline">Properties help</a>
        <button type="button" disabled className="h-[21px] w-[73px] border border-[#bfbfbf] bg-[#cccccc] text-[#838383]">Apply</button>
      </div>
    </section>
  );
}

/* ---------- project browser ---------- */

const LegendIcon = () => (
  <Svg>
    <rect x=".6" y=".6" width="15" height="15" fill="#f3f4f7"/>
    <path d="M0 2h16" stroke="#7b8290" strokeWidth="3"/>
    <path d="M3 6h3v3H3z" fill={INK}/>
    <circle cx="4.500" cy="12.500" r="1.500" fill={INK}/>
    <path d="M8 6.500h2M11 6.500h3M8 9h6M8 12h2M11 12h3"/>
  </Svg>
);

const ScheduleIcon = () => (
  <Svg>
    <rect x=".6" y="2.500" width="15" height="11" fill="#f3f4f7"/>
    <path d="M0 3.500h16" strokeWidth="2.500"/>
    <path d="M1 7.500h14M1 10.500h14M5.500 5v8M10.500 5v8" stroke="#8a909c"/>
  </Svg>
);

const SheetIcon = () => (
  <Svg>
    <path d="M.6 2h11l4 4v8H.6z" fill="#f3f4f7"/>
    <path d="M3 5h6v6M3 8h3v4M9 11H6M11.500 2v4h4M12.500 8v5"/>
  </Svg>
);

const FamilyIcon = () => (
  <Svg>
    <path d="M1.500 1.500h6v6h-6zM10.500 1.500h4v9h-4zM1.500 10.500h6v4h-6z" fill="#f3f4f7"/>
  </Svg>
);

const ViewsIcon = () => (
  <Svg>
    <path d="M5 1.500H1.500V5M11 1.500h3.500V5M1.500 11v3.500H5M14.500 11v3.500H11"/>
    <path d="M4.500 6.500l2-2h5v5l-2 2h-5z" fill="#eef0f4"/>
  </Svg>
);

// one 20px column of the tree: up / down / right are dotted stubs from the middle
function Guide({up, down, right = 0, box}: {up?: boolean; down?: boolean; right?: number; box?: 'plus' | 'minus'}) {
  return (
    <Svg w={20} h={18}>
      <g stroke="#8a8a8a" strokeDasharray="1 1" shapeRendering="crispEdges">
        {up && <path d="M8.500 0v11"/>}
        {down && <path d="M8.500 11v7"/>}
        {right > 0 && <path d={`M8 10.500h${right}`}/>}
      </g>
      {box && (
        <g shapeRendering="crispEdges">
          <rect x="4.500" y="6.500" width="8" height="8" fill="#f5f5f5" stroke="#8d8d8d"/>
          <path d={box === 'plus' ? 'M6 10.500h5M8.500 8v5' : 'M6 10.500h5'} stroke="#2f4d9c"/>
        </g>
      )}
    </Svg>
  );
}

type TreeNode = {
  label: string;
  depth: 0 | 1 | 2;
  box?: 'plus' | 'minus';
  icon?: React.ReactNode;
  last?: boolean;
  inLast?: boolean;
  current?: boolean;
};

const TREE: TreeNode[] = [
  {label: 'Views (all)', depth: 0, box: 'minus', icon: <ViewsIcon/>},
  {label: 'Floor Plans', depth: 1, box: 'minus'},
  {label: 'Level 1', depth: 2, current: true},
  {label: 'Level 2', depth: 2},
  {label: 'Site', depth: 2, last: true},
  {label: 'Ceiling Plans', depth: 1, box: 'minus'},
  {label: 'Level 1', depth: 2},
  {label: 'Level 2', depth: 2, last: true},
  {label: '3D Views', depth: 1, box: 'plus'},
  {label: 'Elevations (Building Elevation)', depth: 1, box: 'minus', last: true},
  {label: 'East', depth: 2, inLast: true},
  {label: 'North', depth: 2, inLast: true},
  {label: 'South', depth: 2, inLast: true},
  {label: 'West', depth: 2, inLast: true, last: true},
  {label: 'Legends', depth: 0, icon: <LegendIcon/>},
  {label: 'Schedules/Quantities (all)', depth: 0, icon: <ScheduleIcon/>},
  {label: 'Sheets (all)', depth: 0, icon: <SheetIcon/>},
  {label: 'Families', depth: 0, box: 'plus', icon: <FamilyIcon/>},
];

function TreeRow({node, first}: {node: TreeNode; first: boolean}) {
  return (
    <li className="flex h-[18px] items-center whitespace-nowrap">
      {node.depth === 0 && (
        <>
          <Guide up={!first} down right={11} box={node.box}/>
          <span className="flex w-5 pb-px">{node.icon}</span>
          <span className="pl-[2px]">{node.label}</span>
        </>
      )}
      {node.depth === 1 && (
        <>
          <Guide up down/>
          <Guide up down={!node.last} right={15} box={node.box}/>
          <span className="pl-[6px]">{node.label}</span>
        </>
      )}
      {node.depth === 2 && (
        <>
          <Guide up down/>
          <Guide up={!node.inLast} down={!node.inLast}/>
          <Guide up down={!node.last} right={15}/>
          <span className={clsx('ml-[3px] px-[3px] leading-[18px]', node.current && 'bg-[#e2e2e2] font-bold')}>
            {node.label}
          </span>
        </>
      )}
    </li>
  );
}

function ProjectBrowser() {
  return (
    <section className="flex min-h-0 flex-1 flex-col bg-[#eeeeee] px-[2px]">
      <PaletteHeader title="Project Browser - ramp"/>
      <ul className="min-h-0 flex-1 overflow-hidden bg-white text-black">
        {TREE.map((node, i) => (
          <TreeRow key={i} node={node} first={i === 0}/>
        ))}
      </ul>
    </section>
  );
}

/* ---------- drawing area ---------- */

function DrawingArea() {
  return (
    <main className="flex min-w-0 flex-1 flex-col">
      <div className="flex h-5 shrink-0">
        <button type="button" className="flex w-32 items-center gap-2 pl-1 pt-px"><House grey/>{'{3D}'}</button>
        <div className="flex w-32 items-center justify-between bg-white pl-[5px] pr-[5px] pt-px">
          <button type="button" className="flex items-center gap-[7px] font-bold">
            <Svg>
              <path d="M.5 1.500h9l1 2h5v11H.5z" fill="#e9ebf1"/>
              <path d="M10 3.500h5.500v11h-9v-3M6.500 5v6M9 6.500h6" strokeDasharray="3 1"/>
            </Svg>
            Level 1
          </button>
          <button type="button" aria-label="Close Level 1"><CloseIcon/></button>
        </div>
      </div>
      <div className="min-h-0 flex-1 bg-white">
        <svg className="block size-full" fill="none" stroke="#a6a6a6" shapeRendering="crispEdges" role="img" aria-label="Door plan">
          <g transform="translate(-398 -198)">
            <path d="M699.500 613.500h608v76h-608z"/>
            <path d="M829.500 689.500v-424h19v348M1177.500 613.500v76"/>
            <path d="M848.500 265.500L893 271l42 10.500L978 298.500l38 20.500 37 27.500 29.500 27.500L1111 408l24 37 18 40 14 42 8 41 2.500 29v16.500"/>
          </g>
        </svg>
      </div>
    </main>
  );
}

function Markup() {
  return (
    <svg
      className="pointer-events-none absolute inset-0 size-full"
      fill="none"
      stroke="#ed1c24"
      strokeWidth="5"
      strokeLinecap="round"
      strokeLinejoin="round"
      aria-hidden="true"
    >
      <path d="M731 48.500h89c10 0 15.500 4 15.500 13v20c0 9-5 13.500-14 14l-80 .500c-18 0-26-3-26-15V62c0-9 6-13.500 15.500-13.500z"/>
      <path d="M748 98C710 194 650 345 610 450C584 518 561 580 543 640C527 693 514.500 745 514.500 788C514.500 858 554 886.500 630 886.500C715 886.500 870 849 978 826L869.500 800.500"/>
    </svg>
  );
}

export default function App() {
  return (
    <div className="relative flex h-screen flex-col overflow-hidden bg-[#cccccc] font-['Open_Sans','Noto_Sans',sans-serif] text-[12px] leading-4 text-[#333]">
      <QuickAccess/>
      <RibbonTabs/>
      <Ribbon/>
      <div className="ml-[3px] mt-px flex h-[26px] shrink-0 items-center bg-[#d3ebe7] pl-[9px] pt-[2px] text-black">
        Modify | Swept Blend
      </div>
      <div className="mt-[2px] flex min-h-0 flex-1">
        <aside className="ml-[3px] mr-[2px] flex w-[393px] shrink-0 flex-col gap-[2px]">
          <PropertiesPalette/>
          <ProjectBrowser/>
        </aside>
        <DrawingArea/>
      </div>
      <Markup/>
    </div>
  );
}
